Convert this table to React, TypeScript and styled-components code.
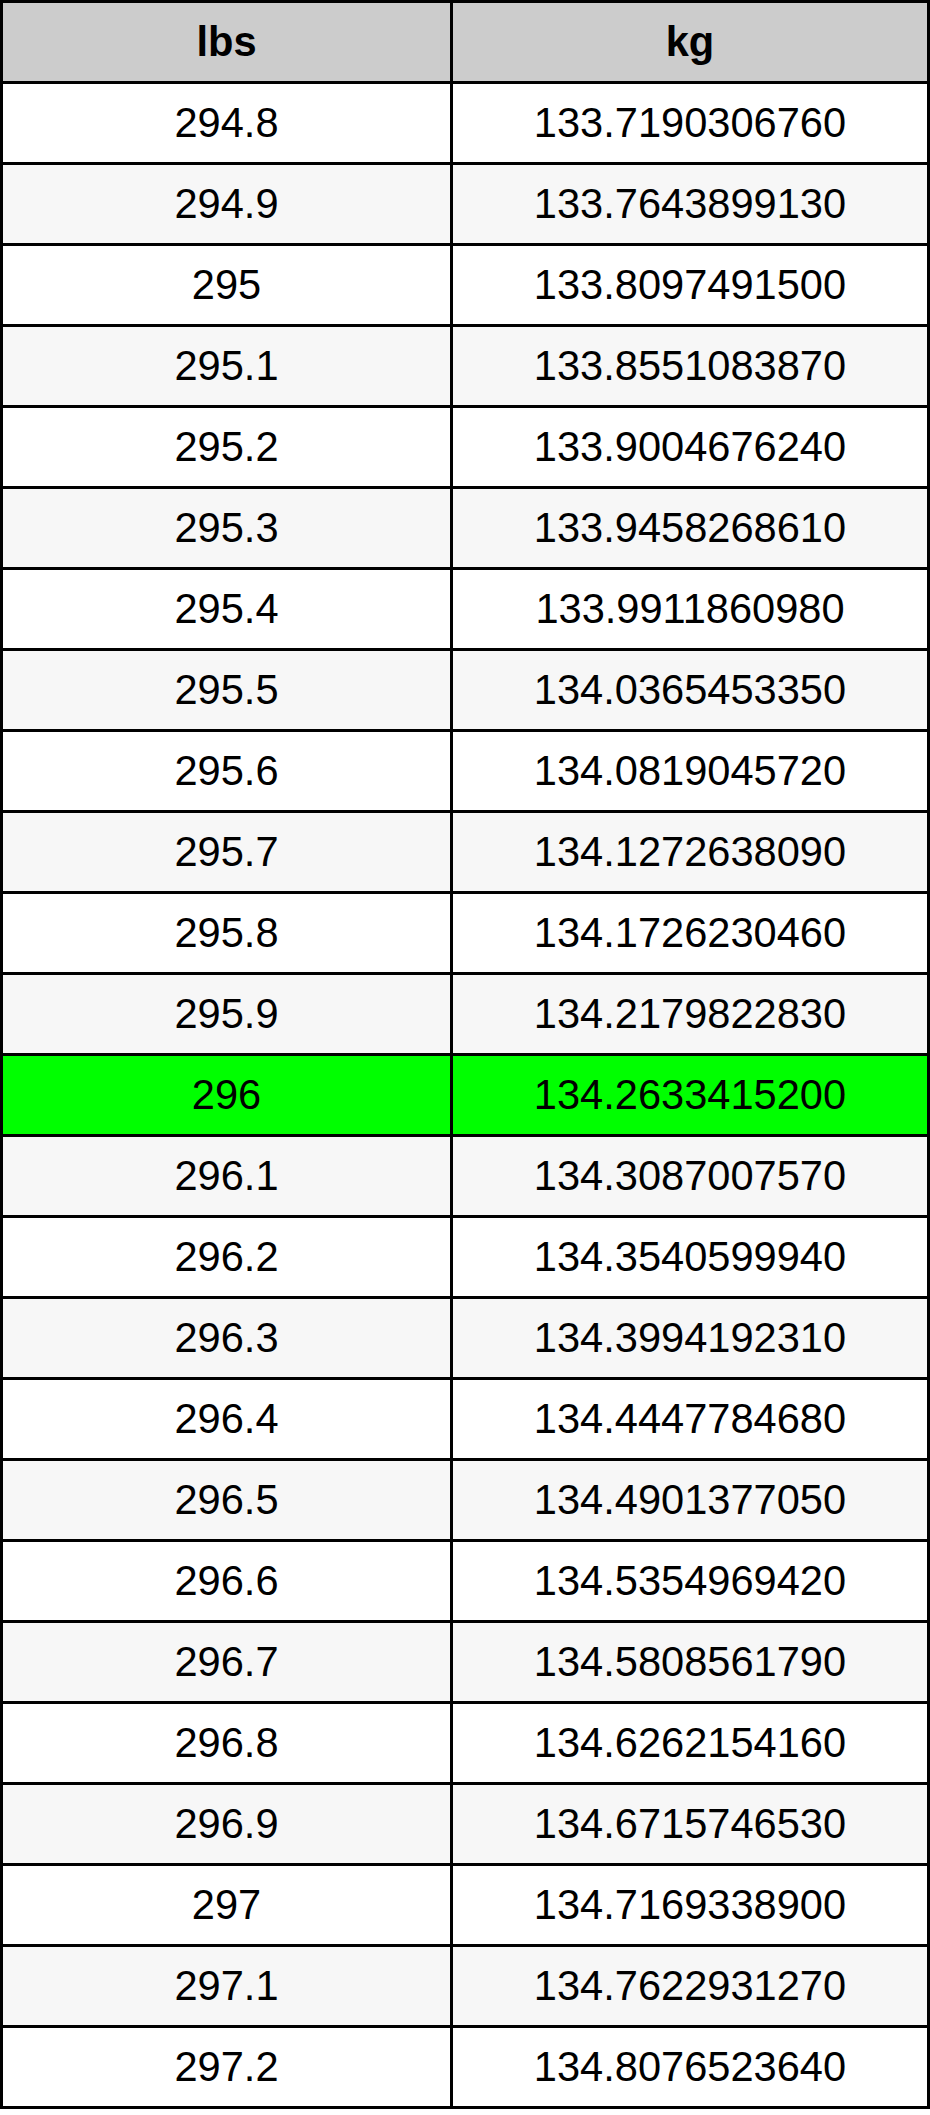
import React from 'react';
import styled, { createGlobalStyle } from 'styled-components';

const GlobalStyle = createGlobalStyle`
  html, body {
    margin: 0;
    padding: 0;
    background: #ffffff;
  }
  body {
    font-family: "Liberation Sans", Arial, Helvetica, sans-serif;
    color: #000;
  }
`;

const Table = styled.table`
  width: 930px;
  table-layout: fixed;
  border-collapse: separate;
  border-spacing: 0;
  border-top: 3px solid #000;
  border-left: 3px solid #000;
  font-size: 41.6px;
`;

const Col = styled.col<{ $w: number }>`
  width: ${(p) => p.$w}px;
`;

const HeadCell = styled.th`
  background: #cccccc;
  font-weight: bold;
  text-align: center;
  padding: 0;
  line-height: 78px;
  border-right: 3px solid #000;
  border-bottom: 3px solid #000;
`;

const Row = styled.tr<{ $hl?: boolean }>`
  background: #ffffff;
  &:nth-child(even) {
    background: #f7f7f7;
  }
  ${(p) => (p.$hl ? '&&& { background: #00ff00; }' : '')}
`;

const Cell = styled.td`
  text-align: center;
  padding: 0;
  line-height: 78px;
  white-space: nowrap;
  border-right: 3px solid #000;
  border-bottom: 3px solid #000;
`;

const rows: [string, string][] = [
  ['294.8', '133.7190306760'],
  ['294.9', '133.7643899130'],
  ['295', '133.8097491500'],
  ['295.1', '133.8551083870'],
  ['295.2', '133.9004676240'],
  ['295.3', '133.9458268610'],
  ['295.4', '133.9911860980'],
  ['295.5', '134.0365453350'],
  ['295.6', '134.0819045720'],
  ['295.7', '134.1272638090'],
  ['295.8', '134.1726230460'],
  ['295.9', '134.2179822830'],
  ['296', '134.2633415200'],
  ['296.1', '134.3087007570'],
  ['296.2', '134.3540599940'],
  ['296.3', '134.3994192310'],
  ['296.4', '134.4447784680'],
  ['296.5', '134.4901377050'],
  ['296.6', '134.5354969420'],
  ['296.7', '134.5808561790'],
  ['296.8', '134.6262154160'],
  ['296.9', '134.6715746530'],
  ['297', '134.7169338900'],
  ['297.1', '134.7622931270'],
  ['297.2', '134.8076523640'],
];

const App = () => {
  return (
    <>
      <GlobalStyle />
      <Table>
        <colgroup>
          <Col $w={450} />
          <Col $w={477} />
        </colgroup>
        <thead>
          <tr>
            <HeadCell>lbs</HeadCell>
            <HeadCell>kg</HeadCell>
          </tr>
        </thead>
        <tbody>
          {rows.map(([lbs, kg]) => (
            <Row key={lbs} $hl={lbs === '296'}>
              <Cell>{lbs}</Cell>
              <Cell>{kg}</Cell>
            </Row>
          ))}
        </tbody>
      </Table>
    </>
  );
};

export default App;
